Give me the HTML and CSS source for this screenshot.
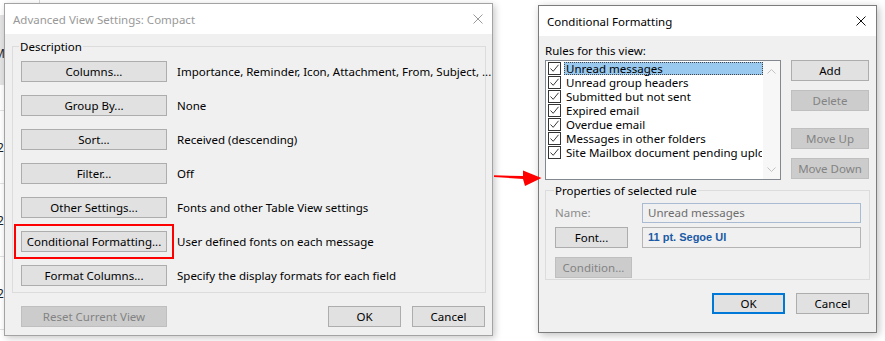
FILE: index.html
```html
<!DOCTYPE html>
<html lang="en">
<head>
<meta charset="utf-8">
<title>Conditional Formatting</title>
<link rel="stylesheet" href="styles.css">
</head>
<body>
<div class="desk">
  <div class="backdrop">
    <div class="bd-top"></div>
    <div class="bd-sel"><span>M</span></div>
    <div class="bd-gap"></div>
    <div class="bd-row"><span>2</span></div>
    <div class="bd-row"><span>2</span></div>
    <div class="bd-row"><span>2</span></div>
  </div>

  <section class="dlg dlg-adv">
    <header class="titlebar inactive">
      <span class="title">Advanced View Settings: Compact</span>
      <svg class="close" width="10" height="10" viewBox="0 0 10 10"><path d="M0.5 0.5L9.5 9.5M9.5 0.5L0.5 9.5"/></svg>
    </header>
    <div class="body adv-body">
      <fieldset class="group adv-group">
        <legend>Description</legend>
        <div class="rows">
          <div class="row"><button class="btn wide">Columns...</button><span class="desc">Importance, Reminder, Icon, Attachment, From, Subject, ...</span></div>
          <div class="row"><button class="btn wide">Group By...</button><span class="desc">None</span></div>
          <div class="row"><button class="btn wide">Sort...</button><span class="desc">Received (descending)</span></div>
          <div class="row"><button class="btn wide">Filter...</button><span class="desc">Off</span></div>
          <div class="row"><button class="btn wide">Other Settings...</button><span class="desc">Fonts and other Table View settings</span></div>
          <div class="row highlight"><button class="btn wide">Conditional Formatting...</button><span class="desc">User defined fonts on each message</span></div>
          <div class="row"><button class="btn wide">Format Columns...</button><span class="desc">Specify the display formats for each field</span></div>
        </div>
      </fieldset>
      <div class="footer adv-footer">
        <button class="btn wide disabled">Reset Current View</button>
        <div class="spacer"></div>
        <button class="btn std">OK</button>
        <button class="btn std">Cancel</button>
      </div>
    </div>
  </section>

  <section class="dlg dlg-cf">
    <header class="titlebar">
      <span class="title">Conditional Formatting</span>
      <svg class="close" width="10" height="10" viewBox="0 0 10 10"><path d="M0.5 0.5L9.5 9.5M9.5 0.5L0.5 9.5"/></svg>
    </header>
    <div class="body cf-body">
      <div class="label-rules">Rules for this view:</div>
      <div class="cf-main">
        <div class="listbox">
          <ul class="items">
            <li class="item"><span class="check"><svg viewBox="0 0 11 11"><path d="M1.5 5.5L4.2 8.3L9.5 1.8"/></svg></span><span class="text selected">Unread messages</span></li>
            <li class="item"><span class="check"><svg viewBox="0 0 11 11"><path d="M1.5 5.5L4.2 8.3L9.5 1.8"/></svg></span><span class="text">Unread group headers</span></li>
            <li class="item"><span class="check"><svg viewBox="0 0 11 11"><path d="M1.5 5.5L4.2 8.3L9.5 1.8"/></svg></span><span class="text">Submitted but not sent</span></li>
            <li class="item"><span class="check"><svg viewBox="0 0 11 11"><path d="M1.5 5.5L4.2 8.3L9.5 1.8"/></svg></span><span class="text">Expired email</span></li>
            <li class="item"><span class="check"><svg viewBox="0 0 11 11"><path d="M1.5 5.5L4.2 8.3L9.5 1.8"/></svg></span><span class="text">Overdue email</span></li>
            <li class="item"><span class="check"><svg viewBox="0 0 11 11"><path d="M1.5 5.5L4.2 8.3L9.5 1.8"/></svg></span><span class="text">Messages in other folders</span></li>
            <li class="item"><span class="check"><svg viewBox="0 0 11 11"><path d="M1.5 5.5L4.2 8.3L9.5 1.8"/></svg></span><span class="text">Site Mailbox document pending upload</span></li>
          </ul>
          <div class="scrollbar">
            <svg class="chev" width="9" height="5" viewBox="0 0 9 5"><path d="M0.5 4.5L4.5 0.5L8.5 4.5"/></svg>
            <svg class="chev" width="9" height="5" viewBox="0 0 9 5"><path d="M0.5 0.5L4.5 4.5L8.5 0.5"/></svg>
          </div>
        </div>
        <div class="side-btns">
          <button class="btn side">Add</button>
          <button class="btn side disabled gap-s">Delete</button>
          <button class="btn side disabled gap-l">Move Up</button>
          <button class="btn side disabled gap-s">Move Down</button>
        </div>
      </div>
      <fieldset class="group cf-group">
        <legend>Properties of selected rule</legend>
        <div class="props">
          <span class="name-label">Name:</span>
          <div class="field name-field">Unread messages</div>
          <button class="btn font-btn">Font...</button>
          <div class="field font-field">11 pt. Segoe UI</div>
          <button class="btn cond-btn disabled">Condition...</button>
        </div>
      </fieldset>
      <div class="footer cf-footer">
        <button class="btn std default">OK</button>
        <button class="btn std">Cancel</button>
      </div>
    </div>
  </section>

  <svg class="arrow" width="52" height="26" viewBox="0 0 52 26"><polygon points="2,10.3 31,11 31,5.5 49.5,13 33,21 31,14 2,12"/></svg>
</div>
</body>
</html>
```

FILE: styles.css
```css
* { box-sizing: border-box; }

html, body {
  margin: 0;
  padding: 0;
  background: #ffffff;
}

body {
  font-family: "Segoe UI", "Noto Sans", "Open Sans", sans-serif;
  font-size: 11.5px;
  color: #000;
  width: 885px;
  height: 341px;
  overflow: hidden;
}

.desk {
  position: relative;
  width: 885px;
  height: 341px;
}

/* outlook content visible behind the dialogs */
.backdrop {
  width: 40px;
  display: flex;
  flex-direction: column;
  font-size: 12px;
  color: #222;
}
.bd-top { height: 15px; border-right: 1px solid #d8d8d8; }
.bd-sel {
  height: 70px;
  background: #e4e4e4;
  display: flex;
  align-items: center;
  padding-top: 6px;
}
.bd-sel span { margin-left: -6px; }
.bd-gap { height: 26px; border-bottom: 1px solid #e2e2e2; }
.bd-row {
  height: 73px;
  display: flex;
  align-items: center;
  border-bottom: 1px solid #e2e2e2;
}
.bd-row span { margin-left: -3px; }

/* dialog window */
.dlg {
  position: absolute;
  display: flex;
  flex-direction: column;
  background: #f0f0f0;
}

.dlg-adv {
  left: 4px;
  top: 3px;
  width: 489px;
  height: 333px;
  border: 1px solid #a3a3a3;
  box-shadow: 2px 2px 7px rgba(0, 0, 0, 0.22);
}

.dlg-cf {
  left: 538px;
  top: 5px;
  width: 339px;
  height: 328px;
  border: 1px solid #7c7c7c;
  box-shadow: 2px 2px 8px rgba(0, 0, 0, 0.25);
}

.titlebar {
  height: 30px;
  flex: none;
  background: #ffffff;
  display: flex;
  align-items: center;
  justify-content: space-between;
  padding-left: 8px;
  font-size: 11.5px;
}
.titlebar .title { color: #000; padding-top: 1px; }
.titlebar.inactive .title { color: #999999; }

.close { fill: none; stroke: #111; stroke-width: 1; }
.inactive .close { stroke: #9a9a9a; }
.dlg-adv .close { margin-right: 9px; }
.dlg-cf .close { margin-right: 10px; }

.body {
  flex: 1;
  display: flex;
  flex-direction: column;
}

/* group box */
.group {
  margin: 0;
  border: 1px solid #dcdcdc;
  min-width: 0;
}
.group legend {
  padding: 2px 1px 0;
  margin-left: -2px;
  line-height: 14px;
  height: 16px;
}

/* buttons */
.btn {
  font-family: inherit;
  font-size: 11.5px;
  color: #000;
  height: 21px;
  padding: 0;
  margin: 0;
  background: #e1e1e1;
  border: 1px solid #adadad;
  border-radius: 0;
  line-height: 17px;
  flex: none;
}
.btn.disabled {
  background: #cccccc;
  border-color: #bfbfbf;
  color: #838383;
}
.btn.wide { width: 146px; }
.btn.std { width: 73px; }

/* advanced view settings */
.adv-body { padding: 0 6px 8px 7px; }
.adv-group {
  margin-top: 4px;
  padding: 7px 8px 6px 8px;
}
.rows {
  display: flex;
  flex-direction: column;
  gap: 13px;
}
.row {
  display: flex;
  align-items: center;
  gap: 10px;
  white-space: nowrap;
}
.row.highlight .btn {
  outline: 2px solid #ff0000;
  outline-offset: 5px;
}
.desc { line-height: 16px; }

.footer {
  display: flex;
  align-items: center;
  margin-top: 13px;
  gap: 11px;
}
.adv-footer { padding: 0 1px 0 9px; }
.spacer { flex: 1; }

/* conditional formatting */
.cf-body { padding: 7px 6px 9px 6px; }
.label-rules { line-height: 16px; height: 16px; }
.cf-main {
  display: flex;
  margin-top: 1px;
  gap: 10px;
}

.listbox {
  width: 236px;
  height: 120px;
  border: 1px solid #828790;
  background: #ffffff;
  display: flex;
}
.items {
  list-style: none;
  margin: 0;
  padding: 0 0 0 2px;
  flex: 1;
  min-width: 0;
  overflow: hidden;
}
.item {
  height: 14px;
  display: flex;
  align-items: flex-start;
  white-space: nowrap;
}
.check {
  width: 13px;
  height: 13px;
  margin-top: 1px;
  flex: none;
  border: 1px solid #333333;
  background: #fff;
  display: flex;
  align-items: center;
  justify-content: center;
}
.check svg {
  width: 11px;
  height: 11px;
  fill: none;
  stroke: #3a3a3a;
  stroke-width: 1;
}
.text {
  flex: 1;
  min-width: 0;
  height: 13px;
  margin-top: 1px;
  margin-left: 3px;
  line-height: 11px;
  padding: 0 1px;
  border: 1px solid transparent;
  overflow-x: clip;
  overflow-y: visible;
}
.text.selected {
  background: #99c9ef;
  border: 1px dotted #444;
}

.scrollbar {
  width: 17px;
  flex: none;
  background: #f7f7f7;
  display: flex;
  flex-direction: column;
  justify-content: space-between;
  align-items: center;
  padding: 8px 0 7px;
}
.chev { fill: none; stroke: #c2c2c2; stroke-width: 1; }

.side-btns {
  display: flex;
  flex-direction: column;
  margin-right: 1px;
}
.btn.side { width: 78px; }
.gap-s { margin-top: 9px; }
.gap-l { margin-top: 17px; }

.cf-group {
  margin-top: 2px;
  padding: 5px 8px 6px 9px;
}
.cf-group legend { margin-left: -1px; }

.props {
  display: grid;
  grid-template-columns: 87px 1fr;
  grid-template-rows: 20px 21px 21px;
  row-gap: 4px;
  align-items: center;
}
.name-label { color: #8d8d8d; line-height: 20px; }
.field {
  height: 20px;
  line-height: 17px;
  padding-left: 5px;
  background: #f0f0f0;
  white-space: nowrap;
}
.name-field {
  border: 1px solid #a9bad3;
  color: #6d6d6d;
}
.font-field {
  height: 21px;
  line-height: 18px;
  border: 1px solid #b4b4b4;
  color: #1a5aa5;
  font-family: "Liberation Sans", Arial, sans-serif;
  font-size: 11px;
  font-weight: bold;
}
.font-btn { width: 73px; }
.cond-btn { width: 77px; margin-top: 9px; }

.cf-footer {
  justify-content: flex-end;
  padding-right: 1px;
}
.btn.default {
  border: 2px solid #0078d7;
}

.arrow {
  position: absolute;
  left: 492px;
  top: 165px;
  fill: #ff0000;
  z-index: 5;
}
```
